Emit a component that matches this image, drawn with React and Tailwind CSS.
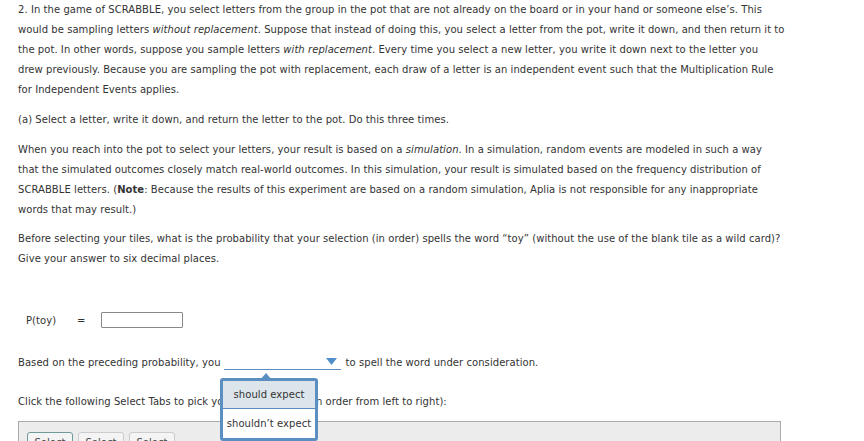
import { useState } from 'react';

function Para({ lines, className = '' }) {
    return (
        <div className={`leading-[20px] ${className}`}>
            {lines.map((l, i) => (
                <div key={i} className="whitespace-nowrap">
                    {l}
                </div>
            ))}
        </div>
    );
}

function App() {
    const [answer, setAnswer] = useState('');

    return (
        <div className="w-[864px] h-[441px] overflow-hidden bg-white text-[#333] text-[10px] tracking-[0.06px] font-['DejaVu_Sans','Verdana',sans-serif] pl-[18px] pt-0">
            <Para
                lines={[
                    "2. In the game of SCRABBLE, you select letters from the group in the pot that are not already on the board or in your hand or someone else’s. This",
                    <>
                        would be sampling letters <i>without replacement</i>. Suppose that instead of doing this, you select a letter from the pot, write it down, and then return it to
                    </>,
                    <>
                        the pot. In other words, suppose you sample letters <i>with replacement</i>. Every time you select a new letter, you write it down next to the letter you
                    </>,
                    'drew previously. Because you are sampling the pot with replacement, each draw of a letter is an independent event such that the Multiplication Rule',
                    'for Independent Events applies.',
                ]}
            />

            <Para className="mt-[10px]" lines={['(a) Select a letter, write it down, and return the letter to the pot. Do this three times.']} />

            <Para
                className="mt-[10px]"
                lines={[
                    <>
                        When you reach into the pot to select your letters, your result is based on a <i>simulation</i>. In a simulation, random events are modeled in such a way
                    </>,
                    'that the simulated outcomes closely match real-world outcomes. In this simulation, your result is simulated based on the frequency distribution of',
                    <>
                        SCRABBLE letters. (<b>Note</b>: Because the results of this experiment are based on a random simulation, Aplia is not responsible for any inappropriate
                    </>,
                    'words that may result.)',
                ]}
            />

            <Para
                className="mt-[9px]"
                lines={[
                    'Before selecting your tiles, what is the probability that your selection (in order) spells the word “toy” (without the use of the blank tile as a wild card)?',
                    'Give your answer to six decimal places.',
                ]}
            />

            <div className="flex items-center mt-[43px] pl-[8px] h-[16px]">
                <span className="w-[51px]">P(toy)</span>
                <span className="w-[24px]">=</span>
                <input
                    value={answer}
                    onChange={(e) => setAnswer(e.target.value)}
                    className="w-[82px] h-[16px] border border-[#888] rounded-[1px] outline-none px-1 text-[10px]"
                />
            </div>

            <div className="flex items-center mt-[26px] h-[16px] relative">
                <span>Based on the preceding probability, you</span>
                <div className="ml-[3px] w-[117px] h-[16px] border-b border-[#5a8ec0] relative flex justify-end items-center pr-[4px]">
                    <svg width="11" height="7" viewBox="0 0 11 7">
                        <path d="M0 0 L11 0 L5.5 7 Z" fill="#4f8fcb" />
                    </svg>
                </div>
                <span className="ml-[5px]">to spell the word under consideration.</span>

                {/* open dropdown list */}
                <div className="absolute left-[202px] top-[24px] z-10 w-[98px]">
                    <svg className="absolute left-[40px] top-[-5px]" width="12" height="7" viewBox="0 0 12 7">
                        <path d="M0 7 L6 0 L12 7 Z" fill="#5b8fc2" />
                    </svg>
                    <div className="border-[3px] border-[#5b8fc2] rounded-[3px] bg-white">
                        <div className="h-[28px] flex items-center justify-center bg-[#dce5ec] border-b border-[#5b8fc2]">
                            should expect
                        </div>
                        <div className="h-[29px] flex items-center justify-center">shouldn’t expect</div>
                    </div>
                </div>
            </div>

            <div className="mt-[23px] h-[16px] flex items-center">
                Click the following Select Tabs to pick your letter choices (in order from left to right):
            </div>

            <div className="mt-[12px] w-[763px] h-[40px] bg-[#ececec] border border-[#aaa] pl-[8px] pt-[10px] flex gap-[5px]">
                <button className="w-[46px] h-[20px] rounded-[3px] border border-[#6f9a9a] bg-[#f4f4f4] text-[#444] text-[10px]">Select</button>
                <button className="w-[46px] h-[20px] rounded-[3px] border border-[#ccc] bg-[#f4f4f4] text-[#444] text-[10px]">Select</button>
                <button className="w-[46px] h-[20px] rounded-[3px] border border-[#ccc] bg-[#f4f4f4] text-[#444] text-[10px]">Select</button>
            </div>
        </div>
    );
}

export default App;
